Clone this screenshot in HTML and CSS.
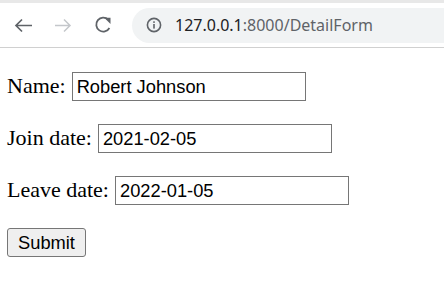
FILE: index.html
```html
<!DOCTYPE html>
<html lang="en">
<head>
    <meta charset="UTF-8">
    <meta name="viewport" content="width=device-width, initial-scale=1.0">
    <title>DetailForm</title>
    <link rel="stylesheet" href="styles.css">
</head>
<body>
    <div class="tabstrip"></div>
    <div class="toolbar">
        <span class="nav-btn">
            <svg width="20" height="20" viewBox="0 0 20 20"><path d="M19 10.5H3M9 4.5l-6 6 6 6" fill="none" stroke="#5f6368" stroke-width="1.7"/></svg>
        </span>
        <span class="nav-btn">
            <svg width="20" height="20" viewBox="0 0 20 20"><path d="M2 10.5h15M11 4.5l6 6-6 6" fill="none" stroke="#c4c7cb" stroke-width="1.5"/></svg>
        </span>
        <span class="nav-btn">
            <svg width="20" height="20" viewBox="0 0 20 20"><path d="M16.4 13A7 7 0 1 1 15.2 4.6" fill="none" stroke="#5f6368" stroke-width="1.8"/><path d="M11.3 2.8h6.2V9z" fill="#5f6368"/></svg>
        </span>
        <div class="omnibox">
            <svg class="info" width="16" height="16" viewBox="0 0 16 16"><circle cx="8" cy="8" r="6.6" fill="none" stroke="#5f6368" stroke-width="1.6"/><rect x="7.2" y="7" width="1.6" height="4.6" fill="#5f6368"/><rect x="7.2" y="4.3" width="1.6" height="1.6" fill="#5f6368"/></svg>
            <span class="host">127.0.0.1</span><span class="path">:8000/DetailForm</span>
        </div>
    </div>

    <form class="detail-form">
        <p class="row"><label>Name:</label><input type="text" value="Robert Johnson"></p>
        <p class="row"><label>Join date:</label><input type="text" value="2021-02-05"></p>
        <p class="row"><label>Leave date:</label><input type="text" value="2022-01-05"></p>
        <p class="row"><button type="submit">Submit</button></p>
    </form>
</body>
</html>
```

FILE: styles.css
```css
body {
    margin: 0;
    background-color: #fff;
}
.tabstrip {
    height: 3px;
    background-color: #e8e8e8;
}
.toolbar {
    display: flex;
    align-items: center;
    height: 44px;
    border-bottom: 1px solid #d0d0d0;
    padding-left: 13px;
}
.nav-btn {
    display: flex;
    width: 20px;
    height: 20px;
    margin-right: 20px;
}
.omnibox {
    flex: 1;
    display: flex;
    align-items: center;
    height: 35px;
    margin-left: -1px;
    border-radius: 18px 0 0 18px;
    background-color: #f1f3f4;
    padding-left: 14px;
    font-family: "Noto Sans", sans-serif;
    font-size: 16px;
}
.info {
    margin-right: 13px;
}
.host {
    color: #202124;
}
.path {
    color: #5f6368;
}
.detail-form {
    display: flex;
    flex-direction: column;
    gap: 23px;
    padding: 24px 7px;
    font-family: "Liberation Serif", serif;
    font-size: 22px;
}
.row {
    display: flex;
    align-items: baseline;
    gap: 6px;
    margin: 0;
}
.row input {
    width: 234px;
    height: 29px;
    box-sizing: border-box;
    border: 1px solid #767676;
    padding: 0 4px;
    font-family: "Liberation Sans", sans-serif;
    font-size: 18.3px;
    color: #000;
}
.row button {
    width: 79px;
    height: 29px;
    border: 1px solid #767676;
    border-radius: 3px;
    background-color: #efefef;
    font-family: "Liberation Sans", sans-serif;
    font-size: 18.3px;
    color: #000;
}
```
